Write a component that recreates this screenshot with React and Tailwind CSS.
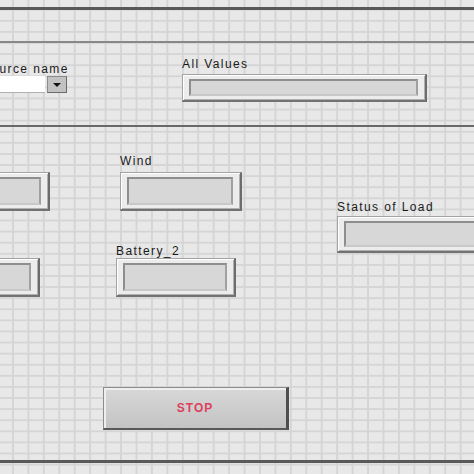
import React from "react";

function Label({ children, cls }) {
  return (
    <div
      className={`h-[14px] leading-[14px] text-[12px] tracking-[1.4px] text-[#1a1a1a] whitespace-nowrap ${cls}`}
    >
      {children}
    </div>
  );
}

function Indicator({ cls }) {
  return (
    <div
      className={`flex border border-[#a3a3a3] border-r-2 border-b-2 border-r-[#6c6c6c] border-b-[#727272] bg-[#ececec] shadow-[inset_1px_1px_0_#ffffff,inset_-1px_-1px_0_#b0b0b0] pl-[6px] pr-[7px] py-[4px] ${cls}`}
    >
      <div className="flex-1 bg-[#d7d7d7] border-2 border-[#8e8e8e] border-b-[#c8c8c8] border-r-[#a0a0a0]" />
    </div>
  );
}

export default function App() {
  return (
    <div
      className="w-[474px] h-[474px] overflow-hidden flex flex-col bg-[#e8e8e8] bg-[linear-gradient(to_right,#d5d5d5_1.5px,transparent_1.5px),linear-gradient(to_bottom,#d5d5d5_1.5px,transparent_1.5px)] bg-size-[15.45px_11.1px] bg-position-[12px_8.8px] font-['Liberation_Sans',Arial,sans-serif]"
    >
      <div className="mt-[7px] h-[3px] bg-[#595959] shrink-0" />
      <div className="mt-[31px] h-[2px] bg-[#888888] shrink-0" />

      {/* section 1 */}
      <div className="h-[82px] shrink-0 flex items-start">
        <div className="ml-[-60px] w-[127px] mt-[19px] flex flex-col">
          <Label cls="pl-[42px]">Source name</Label>
          <div className="h-[17px] flex">
            <div className="flex-1 bg-white border-b border-[#b0b0b0]" />
            <div className="ml-[2px] w-[20px] bg-[#c2c2c2] border border-[#8c8c8c] border-r-[#6a6a6a] border-b-[#6a6a6a] flex items-center justify-center">
              <div className="w-0 h-0 border-l-[4px] border-r-[4px] border-t-[4px] border-l-transparent border-r-transparent border-t-[#111111]" />
            </div>
          </div>
        </div>
        <div className="ml-[115px] mt-[14px] flex flex-col">
          <Label>All Values</Label>
          <Indicator cls="mt-[3px] w-[245px] h-[28px] py-[3px]" />
        </div>
      </div>

      <div className="h-[2px] bg-[#686868] shrink-0" />

      {/* section 2 */}
      <div className="h-[333px] shrink-0 flex flex-col">
        <div className="flex items-start">
          <div className="ml-[-80px] w-[130px] flex flex-col">
            <Indicator cls="ml-[8px] mt-[45px] w-[122px] h-[39px]" />
            <Indicator cls="mt-[47px] w-[120px] h-[39px]" />
          </div>
          <div className="ml-[65px] flex flex-col">
            <Label cls="ml-[5px] mt-[27px]">Wind</Label>
            <Indicator cls="ml-[5px] mt-[4px] w-[122px] h-[39px]" />
            <Label cls="ml-[1px] mt-[33px]">Battery_2</Label>
            <Indicator cls="ml-[1px] w-[120px] h-[39px]" />
          </div>
          <div className="ml-[95px] flex flex-col">
            <Label cls="mt-[73px]">Status of Load</Label>
            <Indicator cls="mt-[2px] w-[150px] h-[37px]" />
          </div>
        </div>
        <div className="mt-[90px] ml-[103px] w-[186px] h-[43px] flex items-center justify-center border border-[#8c8c8c] border-r-[3px] border-r-[#4e4e4e] border-b-2 border-b-[#585858] bg-[linear-gradient(to_bottom,#d8d8d8,#c3c3c3)] shadow-[inset_2px_2px_0_#eeeeee]">
          <span className="text-[12px] font-bold tracking-[1px] text-[#dd3f5c]">STOP</span>
        </div>
      </div>

      <div className="h-[3px] bg-[#595959] shrink-0" />
    </div>
  );
}
